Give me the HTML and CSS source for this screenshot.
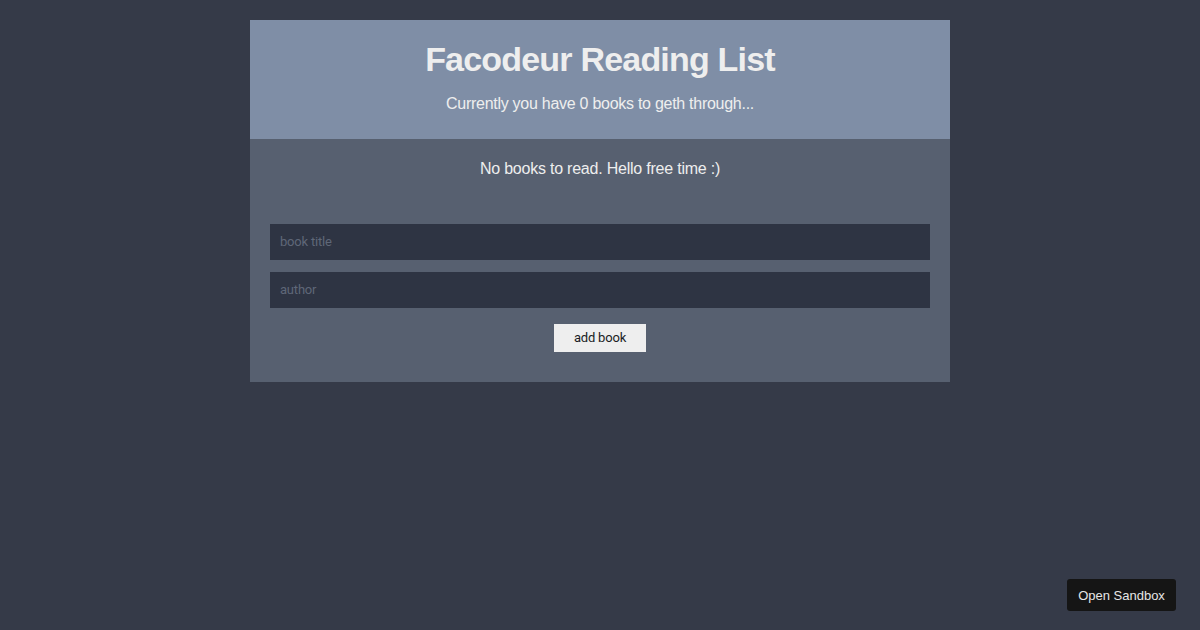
FILE: index.html
```html
<!DOCTYPE html>
<html>
<head>
<meta charset="utf-8">
<link rel="stylesheet" href="styles.css">
</head>
<body>
<div class="app">
  <header class="head">
    <h1 class="title">Facodeur Reading List</h1>
    <p class="subtitle">Currently you have 0 books to geth through...</p>
  </header>
  <main class="content">
    <p class="empty">No books to read. Hello free time :)</p>
    <form class="form">
      <input class="field" type="text" placeholder="book title">
      <input class="field" type="text" placeholder="author">
      <button class="add" type="button">add book</button>
    </form>
  </main>
</div>
<a class="sandbox">Open Sandbox</a>
</body>
</html>
```

FILE: styles.css
```css
html, body {
  margin: 0;
  padding: 0;
}
body {
  background: #353a48;
  font-family: "Liberation Sans", Arial, sans-serif;
  color: #eeeeee;
  height: 630px;
  padding-top: 20px;
  box-sizing: border-box;
}
.app {
  width: 700px;
  margin: 0 auto;
}
.head {
  background: #7f8ea6;
  text-align: center;
  padding: 19px 0 26px;
}
.title {
  margin: 0;
  font-size: 34px;
  line-height: 40px;
  letter-spacing: -0.8px;
  font-weight: bold;
  color: #eeeeee;
}
.subtitle {
  margin: 16px 0 0;
  font-size: 16px;
  line-height: 18px;
  letter-spacing: -0.27px;
}
.content {
  background: #576070;
  padding: 21px 20px 30px;
}
.empty {
  margin: 0;
  text-align: center;
  font-size: 16px;
  line-height: 18px;
  letter-spacing: -0.22px;
}
.form {
  margin-top: 46px;
  display: flex;
  flex-direction: column;
  align-items: center;
  gap: 12px;
}
.field {
  width: 100%;
  height: 36px;
  box-sizing: border-box;
  border: none;
  outline: none;
  background: #2e3443;
  padding: 0 10px 2px;
  font-family: Roboto, "Liberation Sans", sans-serif;
  font-size: 13px;
  letter-spacing: -0.2px;
  color: #eeeeee;
}
.field::placeholder {
  color: #5f6778;
}
.add {
  margin-top: 4px;
  width: 92px;
  height: 28px;
  border: none;
  background: #eeeeee;
  color: #1a1d24;
  font-family: Roboto, "Liberation Sans", sans-serif;
  font-size: 13px;
  letter-spacing: -0.2px;
  padding: 0 0 2px;
}
.sandbox {
  position: fixed;
  right: 24px;
  bottom: 19px;
  width: 109px;
  height: 32px;
  display: flex;
  align-items: center;
  justify-content: center;
  background: #151515;
  border-radius: 3px;
  color: #e6e6e6;
  font-family: "Liberation Sans", Arial, sans-serif;
  font-size: 13px;
}
```
